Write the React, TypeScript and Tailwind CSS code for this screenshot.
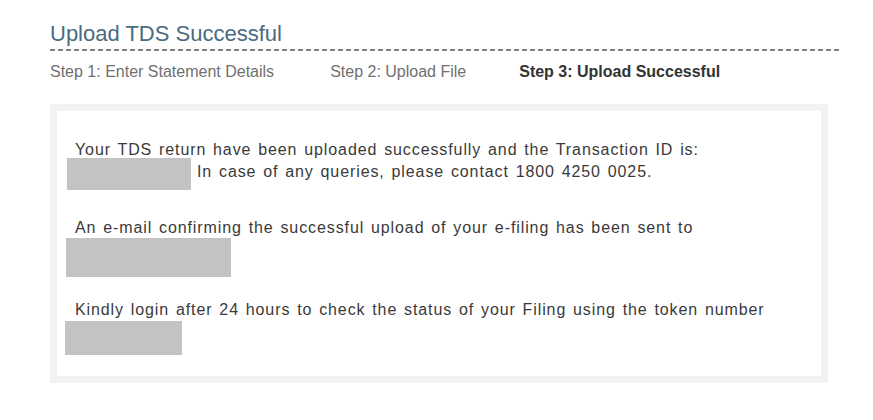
import React from "react";

const steps = [
  { label: "Step 1: Enter Statement Details", active: false, gap: "" },
  { label: "Step 2: Upload File", active: false, gap: "ml-[56px]" },
  { label: "Step 3: Upload Successful", active: true, gap: "ml-[53px]" },
];

const Redacted: React.FC<{ className: string }> = ({ className }) => (
  <span className={`absolute bg-[#c3c3c3] ${className}`} />
);

export default function App() {
  return (
    <div className="min-h-[420px] w-[873px] bg-white pl-[50px] font-['Liberation_Sans',Arial,sans-serif]">
      <div className="w-[790px] pt-[21px]">
        <h1 className="text-[22px] leading-[26px] font-normal text-[#4a6b80]">
          Upload TDS Successful
        </h1>
        <div className="mt-[2px] h-[1.5px] bg-[repeating-linear-gradient(to_right,#808080_0_5px,transparent_5px_8px)]" />
      </div>

      <div className="mt-[11px] flex text-[16px] leading-[20px]">
        {steps.map((s) => (
          <span
            key={s.label}
            className={`${s.gap} ${s.active ? "font-bold text-[#333333]" : "text-[#707070]"}`}
          >
            {s.label}
          </span>
        ))}
      </div>

      <div className="mt-[22px] h-[279px] w-[778px] border-[7px] border-[#f2f2f2] bg-white pl-[18px] pt-[28px] text-[16px] leading-[22px] tracking-[0.9px] [word-spacing:1.5px] text-[#3a3a3a]">
        <p className="relative">
          Your TDS return have been uploaded successfully and the Transaction ID is:
          <br />
          <span className="inline-block w-[122px]" />
          In case of any queries, please contact 1800 4250 0025.
          <Redacted className="left-[-8px] top-[19px] h-[32px] w-[124px]" />
        </p>

        <p className="relative mt-[34px] h-[44px]">
          An e-mail confirming the successful upload of your e-filing has been sent to
          <Redacted className="left-[-9px] top-[21px] h-[39px] w-[165px]" />
        </p>

        <p className="relative mt-[38px] h-[44px]">
          Kindly login after 24 hours to check the status of your Filing using the token number
          <Redacted className="left-[-10px] top-[22px] h-[34px] w-[117px]" />
        </p>
      </div>
    </div>
  );
}
